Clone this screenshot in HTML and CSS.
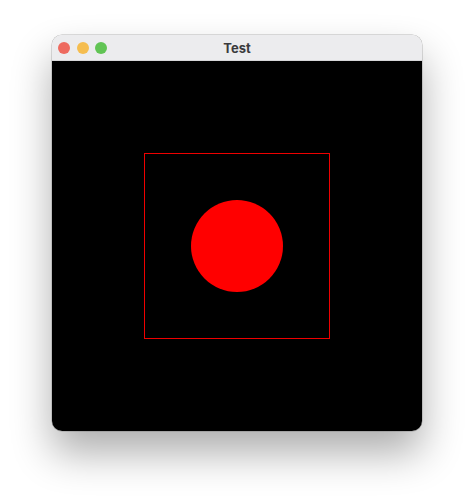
FILE: index.html
```html
<!DOCTYPE html>
<html>
<head>
<meta charset="utf-8">
<link rel="stylesheet" href="styles.css">
</head>
<body>
<div class="stage">
  <div class="window">
    <div class="titlebar">
      <div class="lights">
        <span class="light red"></span>
        <span class="light yellow"></span>
        <span class="light green"></span>
      </div>
      <div class="title">Test</div>
    </div>
    <div class="content">
      <div class="frame">
        <div class="dot"></div>
      </div>
    </div>
  </div>
</div>
</body>
</html>
```

FILE: styles.css
```css
html, body {
  margin: 0;
  padding: 0;
  background: #ffffff;
}
.stage {
  width: 474px;
  height: 499px;
  padding: 35px 0 0 52px;
  box-sizing: border-box;
}
.window {
  width: 370px;
  border-radius: 10px;
  overflow: hidden;
  box-shadow: 0 22px 40px rgba(0,0,0,0.32), 0 0 0 0.5px rgba(0,0,0,0.25);
}
.titlebar {
  position: relative;
  height: 25px;
  background: #ececee;
  border-bottom: 1px solid #d6d6d8;
  display: flex;
  align-items: center;
  justify-content: center;
}
.lights {
  position: absolute;
  left: 6px;
  top: 7px;
  display: flex;
  gap: 6.5px;
}
.light {
  width: 12px;
  height: 12px;
  border-radius: 50%;
  display: block;
}
.red { background: #ee6a5f; }
.yellow { background: #f5bd4f; }
.green { background: #61c454; }
.title {
  font-family: "Inter", "Liberation Sans", sans-serif;
  font-weight: 700;
  font-size: 13px;
  color: #3b3b3d;
  padding-top: 1px;
}
.content {
  height: 370px;
  background: #000000;
  display: flex;
  align-items: center;
  justify-content: center;
}
.frame {
  width: 186px;
  height: 186px;
  box-sizing: border-box;
  border: 1px solid #ee0000;
  display: flex;
  align-items: center;
  justify-content: center;
}
.dot {
  width: 92px;
  height: 92px;
  border-radius: 50%;
  background: #ff0000;
}
```
